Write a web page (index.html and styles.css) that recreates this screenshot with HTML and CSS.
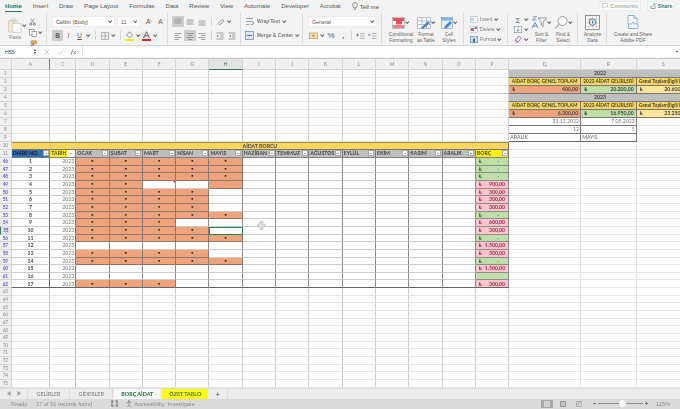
FILE: index.html
```html
<!DOCTYPE html>
<html lang="tr">
<head>
<meta charset="utf-8">
<title>Excel</title>
<link rel="stylesheet" href="styles.css">
</head>
<body>
<div class="app">
  <header class="menubar">
    <nav class="tabs">
      <span class="tab active">Home</span><span class="tab">Insert</span><span class="tab">Draw</span><span class="tab">Page Layout</span><span class="tab">Formulas</span><span class="tab">Data</span><span class="tab">Review</span><span class="tab">View</span><span class="tab">Automate</span><span class="tab">Developer</span><span class="tab">Acrobat</span>
      <span class="tell"><svg width="6" height="8" viewBox="0 0 6 8"><path d="M3 .5a2.4 2.4 0 0 0-1.2 4.5v1h2.4V5A2.4 2.4 0 0 0 3 .5zM2 7.4h2" fill="none" stroke="#666" stroke-width=".7"/></svg>Tell me</span>
    </nav>
    <div class="actions">
      <span class="act comments"><svg width="6" height="6" viewBox="0 0 6 6"><path d="M.5.5h5v3.6H2L.9 5.400V4.100H.5z" fill="none" stroke="#bbb" stroke-width=".6"/></svg>Comments</span>
      <span class="act share"><svg width="6" height="6" viewBox="0 0 6 6"><path d="M1 2.500v3h4v-3M2 3.500 5 .8M3.500.8H5v1.400" fill="none" stroke="#3f7a5a" stroke-width=".6"/></svg>Share</span>
    </div>
  </header>

  <section class="ribbon">
    <div class="group g-clip">
      <div class="paste">
        <div class="paste-top">
          <svg width="15" height="15" viewBox="0 0 15 15"><rect x="1.500" y="2.500" width="9" height="11.500" rx=".6" fill="#f4e9d8" stroke="#d9c4a0" stroke-width=".8"/><rect x="4" y="1" width="4" height="2.500" fill="#e8e8e8" stroke="#bbb" stroke-width=".6"/><rect x="6" y="5.500" width="8" height="9" fill="#fafafa" stroke="#c9c9c9" stroke-width=".7"/></svg>
          <i class="chev"></i>
        </div>
        <span class="lbl">Paste</span>
      </div>
      <div class="clip-tools">
        <span class="ib"><svg width="7" height="8" viewBox="0 0 7 8"><path d="M1.500.5 5 5M5.500.5 2 5" stroke="#7b8794" stroke-width=".8" fill="none"/><circle cx="1.700" cy="6.200" r="1.100" fill="none" stroke="#4a6d92" stroke-width=".7"/><circle cx="5.300" cy="6.200" r="1.100" fill="none" stroke="#4a6d92" stroke-width=".7"/></svg></span>
        <span class="row-i"><span class="ib"><svg width="8" height="8" viewBox="0 0 8 8"><rect x=".5" y=".5" width="4.500" height="5.500" fill="#fff" stroke="#777" stroke-width=".6"/><rect x="3" y="2.500" width="4.500" height="5" fill="#fff" stroke="#777" stroke-width=".6"/></svg></span><i class="chev"></i></span>
        <span class="ib"><svg width="8" height="8" viewBox="0 0 8 8"><rect x="2" y=".8" width="5.500" height="3" rx=".5" fill="#e8a25c" stroke="#b4722e" stroke-width=".5"/><path d="M4.500 3.800V5H2.500v2.500" stroke="#b44a3a" stroke-width="1" fill="none"/></svg></span>
      </div>
    </div>

    <div class="group g-font">
      <div class="rib-row">
        <span class="select s-font">Calibri (Body)<i class="chev"></i></span>
        <span class="select s-size">11<i class="chev"></i></span>
        <span class="ib w12 glyph">A<sup>^</sup></span>
        <span class="ib w12 glyph">A<sup>ˇ</sup></span>
      </div>
      <div class="rib-row">
        <span class="ib on glyph"><b>B</b></span><span class="ib glyph"><em>I</em></span><span class="ib glyph"><u>U</u></span><i class="chev cw"></i><span class="sep"></span>
        <span class="ib"><svg width="8" height="8" viewBox="0 0 8 8"><path d="M.5.5h7v7h-7zM4 .5v7M.5 4h7" fill="none" stroke="#999" stroke-width=".7"/></svg></span><i class="chev cw"></i><span class="sep"></span>
        <span class="ib"><svg width="9" height="10" viewBox="0 0 9 10"><path d="M4.500.8 7.500 4 4.500 7 1.500 4z" fill="none" stroke="#667" stroke-width=".7"/><rect y="8" width="9" height="2" fill="#ffe600"/></svg></span><i class="chev cw"></i>
        <span class="ib"><svg width="9" height="10" viewBox="0 0 9 10"><path d="M1.500 7 4.500.8 7.500 7M2.600 4.800h3.800" fill="none" stroke="#444" stroke-width=".8"/><rect y="8" width="9" height="2" fill="#e0202a"/></svg></span><i class="chev cw"></i>
      </div>
    </div>

    <div class="group g-align">
      <div class="rib-row">
        <span class="ib w12 on"><svg width="8" height="8" viewBox="0 0 8 8"><path class="ln" d="M.5 1h7M.5 3h7M.5 5h7"/></svg></span>
        <span class="ib w12"><svg width="8" height="8" viewBox="0 0 8 8"><path class="ln" d="M.5 2h7M.5 4h7M.5 6h7"/></svg></span>
        <span class="ib w12"><svg width="8" height="8" viewBox="0 0 8 8"><path class="ln" d="M.5 3h7M.5 5h7M.5 7h7"/></svg></span>
        <span class="sep s6"></span>
        <span class="ib w12"><svg width="9" height="8" viewBox="0 0 9 8"><path d="M1 6.500 6 1.500M3 7l3.500-2" stroke="#7a8aa0" stroke-width=".9" fill="none"/><path d="M6.500 1 8 3 6 4.500" stroke="#c05a7a" stroke-width=".7" fill="none"/></svg></span><i class="chev cw"></i>
      </div>
      <div class="rib-row">
        <span class="ib w12"><svg width="8" height="8" viewBox="0 0 8 8"><path class="ln" d="M.5 1.500h7M.5 3.500h4.500M.5 5.500h7M.5 7.500h4.500"/></svg></span>
        <span class="ib w12 on"><svg width="8" height="8" viewBox="0 0 8 8"><path class="ln" d="M.5 1.500h7M2 3.500h4M.5 5.500h7M2 7.500h4"/></svg></span>
        <span class="ib w12"><svg width="8" height="8" viewBox="0 0 8 8"><path class="ln" d="M.5 1.500h7M3 3.500h4.500M.5 5.500h7M3 7.500h4.500"/></svg></span>
        <span class="sep s6"></span>
        <span class="ib w12"><svg width="8" height="8" viewBox="0 0 8 8"><path class="ln" d="M.5 1h7M4 3h3.500M4 5h3.500M.5 7h7"/><path d="M3 4 1 2.700v2.600z" fill="#5a84b4"/></svg></span>
        <span class="ib w12"><svg width="8" height="8" viewBox="0 0 8 8"><path class="ln" d="M.5 1h7M4 3h3.500M4 5h3.500M.5 7h7"/><path d="M1 4l2-1.300v2.600z" fill="#5a84b4"/></svg></span>
      </div>
    </div>

    <div class="group g-wrap">
      <div class="rib-row">
        <span class="ib"><svg width="9" height="9" viewBox="0 0 9 9"><path d="M1 1.500h7M1 7.500h3M1 4.500h6a1.500 1.500 0 0 1 0 3H5.500" fill="none" stroke="#7a8794" stroke-width=".8"/></svg></span>
        <span class="lbl-t">Wrap Text</span><i class="chev cw"></i>
      </div>
      <div class="rib-row">
        <span class="ib"><svg width="9" height="9" viewBox="0 0 9 9"><rect x=".5" y=".5" width="8" height="8" fill="#dbe6f2" stroke="#5a84b4" stroke-width=".7"/><path d="M2 4.500h5" stroke="#3b6ea5" stroke-width=".9"/></svg></span>
        <span class="lbl-t">Merge &amp; Center</span><i class="chev cw"></i>
      </div>
    </div>

    <div class="group g-number">
      <div class="rib-row">
        <span class="select s-num">General<i class="chev"></i></span>
      </div>
      <div class="rib-row">
        <span class="ib"><svg width="9" height="8" viewBox="0 0 9 8"><rect x=".5" y="1" width="8" height="5.500" fill="#f2dcae" stroke="#b98a4a" stroke-width=".6"/><circle cx="4.500" cy="3.700" r="1.300" fill="#e59a6a"/></svg></span><i class="chev cw"></i>
        <span class="ib w12 glyph big">%</span>
        <span class="ib w12 glyph big"><b>,</b></span>
        <span class="sep s4"></span>
        <span class="ib w12"><svg width="9" height="8" viewBox="0 0 9 8"><path d="M4 1.500h4.500M4 4h4.500M4 6.500h4.500" stroke="#9a9a9a" stroke-width=".7"/><path d="M0 3h3M1.500 1.500v3" stroke="#4a7ab0" stroke-width=".8"/></svg></span>
        <span class="ib w12"><svg width="9" height="8" viewBox="0 0 9 8"><path d="M4 1.500h4.500M4 4h4.500M4 6.500h4.500" stroke="#9a9a9a" stroke-width=".7"/><path d="M0 3h3" stroke="#4a7ab0" stroke-width=".8"/></svg></span>
      </div>
    </div>

    <div class="group g-styles">
      <div class="big w26">
        <div class="big-ic"><svg width="13" height="12" viewBox="0 0 13 12"><rect x=".5" y=".5" width="12" height="11" fill="#fff" stroke="#999" stroke-width=".6"/><rect x="1" y="1" width="11" height="3" fill="#e8525a"/><rect x="4" y="4" width="6" height="3.500" fill="#e8525a"/><rect x="1" y="8" width="11" height="3" fill="#e8828a"/></svg><i class="chev"></i></div>
        <span class="lbl">Conditional<br>Formatting</span>
      </div>
      <div class="big w24">
        <div class="big-ic"><svg width="14" height="12" viewBox="0 0 14 12"><path d="M.5.500h13v11H.5zM.5 4h13M.5 7.500h13M5 .5v11M9.500.5v11" fill="#fff" stroke="#8a9aa8" stroke-width=".6"/><path d="M4 11 11 4 13 6 6 12z" fill="#4a88d0"/></svg><i class="chev"></i></div>
        <span class="lbl">Format<br>as Table</span>
      </div>
      <div class="big w22">
        <div class="big-ic"><svg width="12" height="12" viewBox="0 0 12 12"><rect x=".5" y=".5" width="11" height="11" fill="#e8eef6" stroke="#8a9aa8" stroke-width=".6"/><rect x=".5" y=".5" width="11" height="3" fill="#7fb2e4"/><path d="M3 10 9 4l2 2-6 6z" fill="#4a88d0"/></svg><i class="chev"></i></div>
        <span class="lbl">Cell<br>Styles</span>
      </div>
    </div>

    <div class="group g-cells">
      <div class="cell-row"><svg width="8" height="7" viewBox="0 0 8 7"><rect x=".3" y=".3" width="7.400" height="6.400" fill="#fff" stroke="#9ab" stroke-width=".5"/><rect x="1" y="2" width="3" height="3" fill="#bcd4ee"/></svg><span class="lbl-t">Insert</span><i class="chev"></i></div>
      <div class="cell-row"><svg width="8" height="7" viewBox="0 0 8 7"><rect x=".3" y=".3" width="7.400" height="6.400" fill="#fff" stroke="#9ab" stroke-width=".5"/><rect x="1" y="2" width="3" height="3" fill="#d9534f"/><rect x="4.500" y="1" width="2.500" height="2" fill="#5a84b4"/></svg><span class="lbl-t">Delete</span><i class="chev"></i></div>
      <div class="cell-row"><svg width="8" height="7" viewBox="0 0 8 7"><rect x=".3" y=".3" width="7.400" height="6.400" fill="#cfe0f2" stroke="#5a84b4" stroke-width=".6"/><rect x="3" y="2.500" width="2" height="4" fill="#3b6ea5"/></svg><span class="lbl-t">Format</span><i class="chev"></i></div>
    </div>

    <div class="group g-edit">
      <div class="edit-stack">
        <span class="row-i"><span class="ib w10 glyph big">Σ</span><i class="chev cw"></i></span>
        <span class="row-i"><span class="ib w10"><svg width="8" height="7" viewBox="0 0 8 7"><rect x=".3" y=".3" width="7.400" height="6.400" fill="#fff" stroke="#6a8aa8" stroke-width=".6"/><path d="M4 1.500v4M2.500 4 4 5.500 5.500 4" stroke="#3b6ea5" stroke-width=".6" fill="none"/></svg></span><i class="chev cw"></i></span>
        <span class="row-i"><span class="ib w10"><svg width="8" height="8" viewBox="0 0 8 8"><path d="M1 5 5 1l2.500 2.500-4 4H2.500z" fill="#e8e2f4" stroke="#8a5ab8" stroke-width=".7"/><path d="M1.500 4.500 4 7" stroke="#d9408a" stroke-width=".8"/></svg></span><i class="chev cw"></i></span>
      </div>
      <div class="big w21">
        <div class="big-ic"><svg width="16" height="13" viewBox="0 0 16 13"><path d="M4 7.500 1 13M4 7.500 7 13M2 11h4M1.500 1h4L1.500 5h4" transform="translate(0 -1)" fill="none" stroke="#3b7ac0" stroke-width=".8"/><path d="M7 2h8.500l-3.300 4v4.500L10.300 9V6z" fill="none" stroke="#777" stroke-width=".7"/></svg><i class="chev"></i></div>
        <span class="lbl">Sort &amp;<br>Filter</span>
      </div>
      <div class="big w22">
        <div class="big-ic"><svg width="14" height="13" viewBox="0 0 14 13"><circle cx="8.500" cy="5" r="4.500" fill="#fff" stroke="#777" stroke-width=".7"/><path d="M5.300 8.200.8 12.600" stroke="#777" stroke-width="1"/></svg><i class="chev"></i></div>
        <span class="lbl">Find &amp;<br>Select</span>
      </div>
    </div>

    <div class="group g-analyze">
      <div class="big w29">
        <svg width="15" height="15" viewBox="0 0 15 15"><rect x=".5" y=".5" width="14" height="14" fill="#fff" stroke="#666" stroke-width=".7"/><path d="M.5 4h14M.5 8h14M.5 11.500h14M4 .5v14M8 .5v14M11.500.5v14" stroke="#aaa" stroke-width=".5"/><circle cx="7.500" cy="7" r="3.300" fill="#dbe6f2" stroke="#555" stroke-width=".8"/><path d="M7.500 5.500v3" stroke="#2f75b5" stroke-width="1"/></svg>
        <span class="lbl tight">Analyze<br>Data</span>
      </div>
    </div>

    <div class="group g-pdf">
      <div class="big w52">
        <svg width="13" height="15" viewBox="0 0 13 15"><path d="M1 .5h6l3 3V9M7 .5v3h3M1 .5V9" fill="#fff" stroke="#6a9ad0" stroke-width=".7"/><path d="M1.500 13.500V9h3l1.500-2 1.500 2h3.500v4.500z" fill="#eef4fb" stroke="#6a9ad0" stroke-width=".7"/></svg>
        <span class="lbl tight">Create and Share<br>Adobe PDF</span>
      </div>
    </div>
  </section>

  <section class="formula">
    <span class="namebox">H55<span class="stepper"><i></i><i></i></span></span>
    <span class="fx-tools">
      <svg width="6" height="6" viewBox="0 0 6 6"><path d="M.5.500l5 5M5.500.500l-5 5" stroke="#c4c4c4" stroke-width=".8"/></svg>
      <svg width="7" height="6" viewBox="0 0 7 6"><path d="M.5 3.200 2.500 5.500 6.500.5" stroke="#c4c4c4" stroke-width=".8" fill="none"/></svg>
      <em class="fx">fx</em>
    </span>
    <span class="fx-input"><i class="fx-arrow"></i></span>
  </section>

  <main class="sheet">
    <div class="grid" id="grid"></div>
    <svg class="cursor" width="9" height="9" viewBox="0 0 9 9"><path d="M3 0h3v3h3v3H6v3H3V6H0V3h3z" fill="#d8dde0" stroke="#aeb6ba" stroke-width=".5"/></svg>
  </main>

  <footer>
    <div class="sheetbar">
      <span class="nav"><svg width="4" height="5" viewBox="0 0 4 5"><path d="M3.500 0v5L0 2.500z" fill="#999"/></svg><svg width="4" height="5" viewBox="0 0 4 5"><path d="M.5 0v5L4 2.500z" fill="#999"/></svg></span>
      <span class="stab">GELİRLER</span>
      <span class="stab">GİDERLER</span>
      <span class="stab cur">BORÇ AİDAT</span>
      <span class="stab yel">ÖZET TABLO</span>
      <span class="stab plus">+</span>
    </div>
    <div class="status">
      <span class="st-ready">Ready</span>
      <span class="st-rec">17 of 51 records found</span>
      <svg class="st-ic1" width="7" height="7" viewBox="0 0 7 7"><path d="M1 .5v6M6 .5v6M.5 1h2M4.500 1h2M.5 6h2M4.500 6h2" stroke="#555" stroke-width=".8" fill="none"/></svg>
      <svg class="st-ic2" width="6" height="7" viewBox="0 0 6 7"><circle cx="3" cy="1.200" r="1" fill="#888"/><path d="M.3 2.800h5.400M3 2.500V5L1.500 7M3 5l1.500 2" stroke="#888" stroke-width=".7" fill="none"/></svg>
      <span class="st-acc">Accessibility: Investigate</span>
      <span class="st-right">
        <span class="view on"><svg width="6" height="6" viewBox="0 0 6 6"><path d="M.3.300h5.400v5.400H.3zM2.100.3v5.400M3.900.3v5.400M.3 2.100h5.400M.3 3.900h5.400" fill="none" stroke="#fff" stroke-width=".5"/></svg></span>
        <span class="view"><svg width="6" height="6" viewBox="0 0 6 6"><rect width="6" height="6" fill="#9a9a9a"/><rect x="1" y="1" width="4" height="4" fill="#c4c4c4"/></svg></span>
        <span class="view"><svg width="6" height="6" viewBox="0 0 6 6"><path d="M.3.300h5.400v5.400H.3zM3 .3v3H.3" fill="none" stroke="#888" stroke-width=".6"/></svg></span>
        <span class="zoom"><i class="zm"></i><span class="track"><i class="knob"></i></span><i class="zp"></i></span>
        <span class="pct">115%</span>
      </span>
    </div>
  </footer>
</div>
<script src="script.js"></script>
</body>
</html>
```
FILE: styles.css
```css
* { box-sizing: border-box; }
html, body { margin: 0; height: 100%; overflow: hidden; }
body { font-family: "Liberation Sans", Arial, sans-serif; background: #f2f2f2; }
.app { width: 680px; height: 409px; display: flex; flex-direction: column; overflow: hidden; filter: blur(.4px); }

/* menu */
.menubar { height: 12px; display: flex; justify-content: space-between; background: #f3f3f3; flex: none; }
.tabs { display: flex; align-items: center; padding-left: 5px; gap: 10.900px; font-size: 6.100px; color: #555; }
.tab { height: 12px; line-height: 11px; white-space: nowrap; }
.tab.active { color: #2b7a4b; font-weight: 700; border-bottom: 1px solid #2b7a4b; }
.tell { display: flex; align-items: center; gap: 2px; }
.actions { display: flex; gap: 6px; padding: 1px 5px 0 0; }
.act { height: 10px; display: flex; align-items: center; justify-content: center; gap: 2px; font-size: 5.300px; font-weight: 700; background: #fafafa; border: 1px solid #ececec; border-radius: 1px; }
.comments { width: 42px; color: #a9b9ae; }
.share { width: 28px; color: #3f7a5a; }

/* ribbon */
.ribbon { height: 33.500px; flex: none; display: flex; background: #f3f3f3; border-bottom: 1px solid #d4d4d4; font-size: 5.200px; color: #606060; }
.group { height: 31px; margin-top: 1px; flex: none; border-right: 1px solid #dcdcdc; }
.g-clip { width: 47px; display: flex; padding: 2px 0 0 7px; }
.g-font { width: 121px; padding: 3px 0 0 5px; }
.g-align { width: 73px; padding: 3px 0 0 4px; }
.g-wrap { width: 62px; padding: 3px 0 0 3px; }
.g-number { width: 79px; padding: 3px 0 0 5px; }
.g-styles { width: 82px; display: flex; padding: 3px 0 0 6px; }
.g-cells { width: 44px; padding: 0 0 0 6px; }
.g-edit { width: 70px; display: flex; padding: 0 0 0 5px; }
.g-analyze { width: 29px; padding-top: 2px; }
.g-pdf { width: 73px; border-right: 0; padding-top: 2px; }

.rib-row { height: 11px; display: flex; align-items: center; margin-bottom: 3px; }
.ib { width: 11px; height: 11px; display: flex; align-items: center; justify-content: center; flex: none; border-radius: 1px; }
.w12 { width: 12px; }
.w10 { width: 10px; height: 10px; }
.on { background: #cdcdcd; }
.glyph { font-size: 6.500px; color: #5c5c5c; }
.glyph sup { font-size: 4px; line-height: 0; }
.glyph.big { font-size: 8px; }
.ln { stroke: #8a8a8a; stroke-width: .8; fill: none; }
.chev { display: inline-block; width: 2.500px; height: 2.500px; border-right: .7px solid #666; border-bottom: .7px solid #666; transform: rotate(45deg) translate(-.5px, -.5px); flex: none; margin: 0 1px; }
.cw { width: 2.500px; margin: 0 1.750px; }
.sep { width: 8px; height: 9px; flex: none; background: linear-gradient(#d4d4d4, #d4d4d4) center / 1px 100% no-repeat; }
.s6 { width: 6px; }
.s4 { width: 5px; }
.select { height: 11px; background: #fff; border: 1px solid #ececec; border-radius: 1.500px; display: flex; align-items: center; justify-content: space-between; padding: 0 2px 0 3px; font-size: 5.300px; color: #555; flex: none; }
.s-font { width: 63px; }
.s-size { width: 23px; margin: 0 3px 0 2px; }
.s-num { width: 69px; }

.paste { width: 17px; display: flex; flex-direction: column; align-items: flex-start; }
.paste-top { display: flex; align-items: center; height: 18px; margin-top: 1px; }
.paste .lbl { margin: 1px 0 0 2px; color: #8a8a8a; }
.clip-tools { display: flex; flex-direction: column; margin-left: 3px; padding-top: 1px; }
.row-i { display: flex; align-items: center; }
.lbl { display: block; line-height: 6px; text-align: center; white-space: nowrap; font-size: 4.900px; color: #666; }
.lbl-t { white-space: nowrap; color: #666; margin: 0 1px 0 2px; font-weight: 700; font-size: 4.900px; opacity: .85; }
.g-cells .lbl-t { font-weight: 400; font-size: 5.100px; }

.big { display: flex; flex-direction: column; align-items: center; flex: none; }
.big-ic { height: 13px; display: flex; align-items: center; margin-bottom: 3px; }
.w21 { width: 21px; }
.w22 { width: 22px; }
.w24 { width: 24px; }
.w26 { width: 26px; }
.w29 { width: 29px; }
.w52 { width: 52px; }
.tight { margin-top: 2px; }
.g-edit .big { padding-top: 3px; }
.cell-row { height: 10px; display: flex; align-items: center; }
.cell-row:first-child { margin-top: 1px; }
.edit-stack { width: 18px; flex: none; padding-top: 1px; }

/* formula bar */
.formula { height: 13.500px; flex: none; display: flex; align-items: center; background: #f3f3f3; padding-left: 1px; border-bottom: 1px solid #c8c8c8; }
.namebox { width: 36px; height: 11px; background: #fff; display: flex; align-items: center; justify-content: space-between; padding: 0 1px 0 4px; font-size: 5.300px; color: #444; }
.stepper { display: flex; flex-direction: column; gap: 1px; }
.stepper i { display: block; width: 0; height: 0; border: 1.500px solid transparent; border-top: 0; border-bottom: 2px solid #222; }
.stepper i + i { border-bottom: 0; border-top: 2px solid #222; }
.fx-tools { width: 44px; height: 11px; margin-left: 2px; background: #fff; display: flex; align-items: center; gap: 7px; padding-left: 5px; border-right: 1px solid #e4e4e4; flex: none; }
.fx { font-family: "Liberation Serif", serif; font-size: 7px; color: #666; }
.fx-input { flex: 1; height: 11px; background: #fff; display: flex; align-items: center; justify-content: flex-end; padding-right: 2px; }
.fx-arrow { width: 0; height: 0; border: 1.500px solid transparent; border-bottom: 0; border-top: 2px solid #333; }

/* sheet */
.sheet { flex: 1; position: relative; overflow: hidden; background: #fff; min-height: 0; }
.grid { display: grid; width: 697px;
  grid-template-columns: 11.700px 38.600px 26px repeat(13, 33.300px) 72px 55.700px 54px;
  grid-template-rows: 11px repeat(9, 8px) 7.700px 8.300px repeat(30, 7.670px);
  font-family: Lato, "Liberation Sans", sans-serif; font-size: 5.200px; color: #444; }
.c { border-right: 1px solid #e6e6e6; border-bottom: 1px solid #e6e6e6; overflow: hidden; white-space: nowrap; line-height: 6.500px; display: flex; align-items: center; padding: 0 1px; min-width: 0; }
.hd { background: #f0f0f0; border-color: #d4d4d4; justify-content: center; color: #888; font-size: 4.900px; }
.hd.sel { background: #e3e3e3; border-bottom: 1px solid #2f7d52; color: #3f7a5a; }
.hd.mark { border-right: 1px solid #4c8f6c; }
.rn { background: #f0f0f0; border-color: #d4d4d4; justify-content: center; color: #888; font-size: 4.700px; }
.rn.f { color: #5c5cc8; font-weight: 700; }
.rn.cur { border-left: 1px solid #3f7a5a; background: #e3e3e3; }
.vc { border-right-color: #d0d0d0; }
.vd { border-right: 1px solid #bcbcbc; }
.hline { border-bottom-color: #c8c8c8; }

.t { border-right-color: #8c8c8c; border-bottom-color: #cccccc; }
.tA { justify-content: center; font-weight: 700; color: #444; border-right: 1px solid #707070; }
.tC { justify-content: flex-end; color: #777; border-right: 1.500px solid #707070; }
.tO { background: #eea37c; border-color: #8a7a70; justify-content: center; color: #222; font-size: 4.500px; font-weight: 700; }
.tG, .tR { justify-content: space-between; padding: 0 3px; font-weight: 700; border-color: #8c8c8c; }
.tG { background: #bfdeaa; color: #2f7040; padding-right: 9px; }
.tR { background: #fcc6d0; color: #a8304a; }
.last { border-bottom: 1.500px solid #666; }
.note { position: relative; }
.note::after { content: ""; position: absolute; top: 0; right: 0; border: 1.500px solid transparent; border-top-color: #e0202a; border-right-color: #e0202a; }
.cursel { outline: 1px solid #2f7d52; outline-offset: -1px; position: relative; }

.band { grid-column: 2 / span 15; background: #f9d65c; border-top: 1px solid #a09040; border-bottom: 1px solid #777; border-right: 1.500px solid #777; justify-content: center; font-weight: 700; color: #444; }
.th { background: #bfbfbf; border-right: 1px solid #808080; border-bottom: 1px solid #808080; font-weight: 700; color: #444; padding: 0 .5px 0 1px; justify-content: space-between; }
.th.blue { background: #2d6fb4; color: #1a1a2a; }
.th.yel { background: #fff200; }
.th.tc { padding-right: 0; }
.btn { width: 6px; height: 6px; background: #fff; border: .5px solid #aaa; flex: none; display: flex; align-items: center; justify-content: center; }
.btn::after { content: ""; border: 1.200px solid transparent; border-bottom: 0; border-top: 1.500px solid #444; }
.th.yel.tc .btn { width: 8px; height: 7px; border: 0; }

.q { border-color: #777; color: #444; padding: 0 1px; }
.qg { background: #bfbfbf; justify-content: center; font-weight: 700; grid-column: span 3; border-bottom-color: #777; border-right: 0; }
.qh { background: #f9d65c; font-weight: 700; justify-content: center; color: #444; font-size: 4.800px; }
.qs { justify-content: flex-start; background: #f9d65c; font-size: 4.800px; font-weight: 700; color: #444; padding-left: 2px; }
.qv { justify-content: space-between; font-weight: 700; padding: 0 2px 0 3px; color: #444; }
.qo { background: #eea37c; }
.qn { background: #bfdeaa; }
.qy { background: #fee39a; }
.qr { justify-content: flex-end; color: #777; }
.ql { justify-content: flex-start; color: #666; }
.qb { border-bottom: 1.500px solid #666; }
.cursor { position: absolute; left: 257px; top: 162px; }

/* footer */
footer { flex: none; }
.sheetbar { height: 11px; background: #ececec; border-top: 1px solid #dcdcdc; display: flex; align-items: stretch; font-size: 5.400px; color: #777; }
.nav { width: 28px; display: flex; align-items: center; justify-content: center; gap: 6px; border-right: 1px solid #dcdcdc; }
.stab { display: flex; align-items: center; padding: 0 8.500px; border-right: 1px solid #dcdcdc; white-space: nowrap; font-family: Lato, "Liberation Sans", sans-serif; }
.stab.cur { background: #f9f9f9; color: #2b7a4b; font-weight: 900; padding: 0 7px; border: 0; margin-left: 1px; }
.stab.yel { background: #ffff00; color: #3f7a5a; font-weight: 700; padding: 0 7px; margin-left: 2px; border: 0; }
.stab.plus { font-size: 8px; color: #555; padding: 0 7px; }
.status { height: 10.500px; background: #dadada; display: flex; align-items: center; font-size: 5.600px; color: #8c8c8c; }
.st-ready { margin-left: 11px; }
.st-rec { margin-left: 9px; }
.st-ic1 { margin-left: 19px; }
.st-ic2 { margin-left: 8px; }
.st-acc { margin-left: 2px; }
.st-right { margin-left: auto; display: flex; align-items: center; height: 100%; }
.view { width: 12px; height: 8px; display: flex; align-items: center; justify-content: center; margin-right: 4px; }
.view.on { background: #a8a8a8; }
.zoom { display: flex; align-items: center; gap: 2px; margin: 0 8px 0 4px; }
.zm { width: 3px; height: 1px; background: #777; }
.zp { width: 3px; height: 3px; background: linear-gradient(#777, #777) center / 3px 1px no-repeat, linear-gradient(#777, #777) center / 1px 3px no-repeat; }
.track { width: 45px; height: 1px; background: #8a8a8a; display: flex; align-items: center; padding-left: 21px; }
.knob { width: 7px; height: 7px; border-radius: 50%; background: #fff; flex: none; }
.pct { margin-right: 10px; color: #8a8a8a; }
```
FILE: script.js
```js
var letters = ["A","C","D","E","F","G","H","I","J","K","L","M","N","O","P","Q","R","S"];
var months = ["OCAK","ŞUBAT","MART","NİSAN","MAYIS","HAZİRAN","TEMMUZ","AĞUSTOS","EYLÜL","EKİM","KASIM","ARALIK"];
/* paid months per apartment, then the debt column */
var rows = [
  ["11111","-"],["11111","-"],["11111","-"],["11000","900,00"],
  ["11110","300,00"],["11110","300,00"],["11110","300,00"],["11111","-"],
  ["11100","600,00"],["11110","300,00"],["11111","-"],["00000","1.500,00"],
  ["11110","300,00"],["11111","-"],["00000","1.500,00"],["00000",""],["11100","300,00"]
];
var grid = document.getElementById("grid");
function cell(cls, text) {
  var d = document.createElement("div");
  d.className = "c " + cls;
  if (text !== undefined) d.textContent = text;
  grid.appendChild(d);
  return d;
}
function lira(cls, value) {
  var d = cell(cls);
  var a = document.createElement("span"); a.textContent = "₺"; d.appendChild(a);
  var b = document.createElement("span"); b.textContent = value; d.appendChild(b);
}
function lineCls(i) { return i === 0 ? "vc" : i === 1 ? "vd" : i >= 15 ? "" : "vc"; }
function blank(i, extra) { return cell(lineCls(i) + (extra ? " " + extra : "")); }

/* column letters */
cell("hd");
letters.forEach(function (l) { cell("hd" + (l === "H" ? " sel" : "") + (l === "A" ? " mark" : ""), l); });

/* rows 1-9 with the summary tables on the right */
var top9 = [
  function () { cell("q qg", "2022"); },
  function () { cell("q qh", "AİDAT BORÇ GENEL TOPLAM"); cell("q qh", "2023 AİDAT GELİRLERİ"); cell("q qs", "Genel Toplam(İlgili Dönem)"); },
  function () { lira("q qv qo", "400,00"); lira("q qv qn", "20.200,00"); lira("q qv qy", "20.600,00"); },
  function () { cell("q qg", "2023"); },
  function () { cell("q qh", "AİDAT BORÇ GENEL TOPLAM"); cell("q qh", "2023 AİDAT GELİRLERİ"); cell("q qs", "Genel Toplam(İlgili Dönem)"); },
  function () { lira("q qv qo", "6.300,00"); lira("q qv qn", "16.950,00"); lira("q qv qy", "23.250,00"); },
  function () { cell("q qr", "31.12.2022"); cell("q qr", "7.05.2023"); cell(""); },
  function () { cell("q qr", "12"); cell("q qr", "5"); cell(""); },
  function () { cell("q ql qb", "ARALIK"); cell("q ql qb", "MAYIS"); cell(""); }
];
top9.forEach(function (fill, n) {
  cell("rn", String(n + 1));
  for (var i = 0; i < 15; i++) blank(i, n === 2 ? "hline" : "");
  fill();
});

/* row 10: band */
cell("rn", "10");
cell("band", "AİDAT BORCU");
cell(""); cell(""); cell("");

/* row 11: filter headers */
function th(cls, text) {
  var d = cell("th " + cls);
  var s = document.createElement("span"); s.textContent = text; d.appendChild(s);
  var b = document.createElement("i"); b.className = "btn"; d.appendChild(b);
}
cell("rn", "11");
th("blue", "DAİRE NO.");
th("yel tc", "TARİH");
months.forEach(function (m) { th("", m); });
th("yel", "BORÇ");
cell(""); cell(""); cell("");

/* rows 46-62 */
rows.forEach(function (r, n) {
  var no = 46 + n, last = n === rows.length - 1 ? " last" : "";
  cell("rn f" + (no === 55 ? " cur" : ""), String(no));
  cell("t tA" + last, String(n + 1));
  cell("t tC" + last, "2023");
  for (var m = 0; m < 12; m++) {
    var dot = m < 5 && r[0].charAt(m) === "1";
    var unmarked = no === 49 && m === 4;
    var cls = "t" + last;
    if (dot || unmarked) cls += " tO";
    if (no === 49 && m === 2) cls += " note";
    if (no === 55 && m === 4) cls += " cursel";
    cell(cls, dot ? "•" : undefined);
  }
  if (r[1] === "") cell("tG" + last);
  else if (r[1] === "-") lira("tG" + last, "-");
  else lira("tR" + last, r[1]);
  cell(""); cell(""); cell("");
});

/* rows 63-75 */
for (var no = 63; no <= 75; no++) {
  cell("rn", String(no));
  for (var i = 0; i < 18; i++) blank(i);
}
```
